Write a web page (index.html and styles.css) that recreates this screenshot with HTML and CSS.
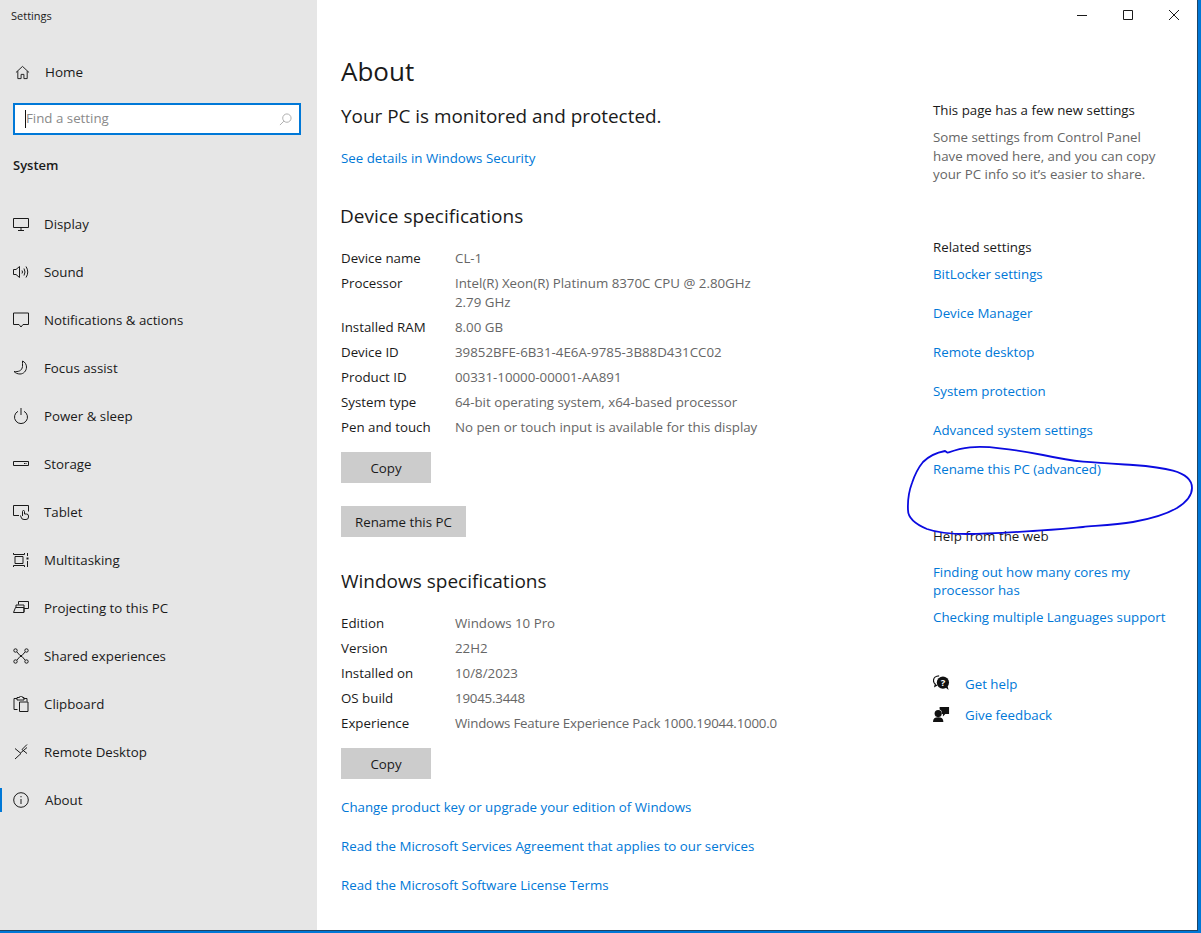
FILE: index.html
```html
<!DOCTYPE html>
<html lang="en">
  <head>
    <meta charset="UTF-8" />
    <meta name="viewport" content="width=device-width, initial-scale=1.0" />
    <title>Settings - About</title>
    <link rel="stylesheet" href="styles.css">
  </head>
  <body>
    <div class="window">
      <aside class="sidebar">
        <div class="app-title">Settings</div>
        <a class="nav-home">
          <svg class="icon" viewBox="0 0 16 16"><path d="M1 8 8 1.500 15 8M3 6.500V14.500h3.500V10h3v4.500H13V6.500"/></svg>
          <span>Home</span>
        </a>
        <div class="search">
          <span class="caret"></span>
          <span class="placeholder">Find a setting</span>
          <svg class="search-icon" viewBox="0 0 14 14"><circle cx="8.500" cy="5.500" r="4.500"/><path d="M5.200 8.800 1 13"/></svg>
        </div>
        <div class="section-title">System</div>
        <nav class="nav-list">
          <a class="nav-item">
            <svg class="icon" viewBox="0 0 16 16"><path d="M.5 2.500h15v9H.5zM5 14.500h6M8 11.500v3"/></svg>
            <span>Display</span>
          </a>
          <a class="nav-item">
            <svg class="icon" viewBox="0 0 16 16"><path d="M.5 5.500h2.500L6.500 2.500v11L3 10.500H.5zM9 6.500q1 1.500 0 3M11 4.500q2 3.500 0 7M13 2.500q3.500 5.500 0 11"/></svg>
            <span>Sound</span>
          </a>
          <a class="nav-item">
            <svg class="icon" viewBox="0 0 16 16"><path d="M.5 1h15v11.500h-5.500L8 15l-2-2.500H.5z"/></svg>
            <span>Notifications &amp; actions</span>
          </a>
          <a class="nav-item">
            <svg class="icon" viewBox="0 0 16 16"><path d="M9.500 1C12 2 13.500 4.500 13.500 7c0 4-3 7-6.500 7-2.500 0-4.500-1-6-2.500 4 .5 8-.5 8.500-5 .2-2-.2-4-0-5.500z"/></svg>
            <span>Focus assist</span>
          </a>
          <a class="nav-item">
            <svg class="icon" viewBox="0 0 16 16"><path d="M5 3.300a6.500 6.500 0 1 0 6 0M8 0v7"/></svg>
            <span>Power &amp; sleep</span>
          </a>
          <a class="nav-item">
            <svg class="icon" viewBox="0 0 16 16"><path d="M.5 5.500h15v4H.5zM11 7.500h1.500M13.500 7.500h.5"/></svg>
            <span>Storage</span>
          </a>
          <a class="nav-item">
            <svg class="icon" viewBox="0 0 16 16"><path d="M6 11.500H.5v-10h15v6M9.500 12V7.500a1 1 0 0 1 2 0V10h2a2 2 0 0 1 2 2v1a2.500 2.500 0 0 1-2.500 2.500h-2a3 3 0 0 1-3-2.500l-.5-1.500"/></svg>
            <span>Tablet</span>
          </a>
          <a class="nav-item">
            <svg class="icon" viewBox="0 0 16 16"><path d="M.5 1v1.500h11V1M2 4.500h8v7H2zM.5 15v-1.500h11V15M14.500 1v3M14.500 9v6"/><path class="dot" d="M13.500 5.500h2v2h-2z"/></svg>
            <span>Multitasking</span>
          </a>
          <a class="nav-item">
            <svg class="icon" viewBox="0 0 16 16"><path d="M5.500 4.500V1.500h10v7H11M3 7.500V5h8v7M.5 12.500l2-5h8.500v5z"/></svg>
            <span>Projecting to this PC</span>
          </a>
          <a class="nav-item">
            <svg class="icon" viewBox="0 0 16 16"><circle cx="2.500" cy="2.500" r="1.700"/><circle cx="13.500" cy="2.500" r="1.700"/><circle cx="2.500" cy="13.500" r="1.700"/><circle cx="13.500" cy="13.500" r="1.700"/><path d="m4 4 3 3.500h2L12 4M4 12l3-3.500h2l3 3.500"/></svg>
            <span>Shared experiences</span>
          </a>
          <a class="nav-item">
            <svg class="icon" viewBox="0 0 16 16"><path d="M4.500 13.500H1v-11h3M10.500 2.500H14v3M4 1.500h2.500a1.500 1.500 0 0 1 3 0H11v2.500H4zM6.500 6h8.500v9.500H6.500z"/></svg>
            <span>Clipboard</span>
          </a>
          <a class="nav-item">
            <svg class="icon" viewBox="0 0 16 16"><path d="M2 4.500 8 9.500 2 15M7.500 9 14 3.500M14 .5 9 5.500l5 4"/></svg>
            <span>Remote Desktop</span>
          </a>
          <a class="nav-item active">
            <svg class="icon" viewBox="0 0 16 16"><circle cx="8" cy="8" r="7.300"/><path d="M8 7v5M8 4v1.300"/></svg>
            <span>About</span>
          </a>
        </nav>
      </aside>

      <main class="content">
        <div class="window-controls">
          <svg viewBox="0 0 46 32"><path d="M18 15.500h10"/></svg>
          <svg viewBox="0 0 46 32"><path d="M18.500 10.500h9v9h-9z"/></svg>
          <svg viewBox="0 0 46 32"><path d="m18 10 10 10M28 10 18 20"/></svg>
        </div>
        <div class="columns">
          <section class="main-col">
            <h1>About</h1>
            <h2 class="status">Your PC is monitored and protected.</h2>
            <a class="link security-link">See details in Windows Security</a>

            <h3 class="device-head">Device specifications</h3>
            <div class="specs">
              <div class="spec"><span>Device name</span><span>CL-1</span></div>
              <div class="spec"><span>Processor</span><span>Intel(R) Xeon(R) Platinum 8370C CPU @ 2.80GHz<br>2.79 GHz</span></div>
              <div class="spec"><span>Installed RAM</span><span>8.00 GB</span></div>
              <div class="spec"><span>Device ID</span><span>39852BFE-6B31-4E6A-9785-3B88D431CC02</span></div>
              <div class="spec"><span>Product ID</span><span>00331-10000-00001-AA891</span></div>
              <div class="spec"><span>System type</span><span>64-bit operating system, x64-based processor</span></div>
              <div class="spec"><span>Pen and touch</span><span>No pen or touch input is available for this display</span></div>
            </div>
            <button class="btn copy-btn">Copy</button>
            <button class="btn rename-btn">Rename this PC</button>

            <h3 class="win-head">Windows specifications</h3>
            <div class="specs">
              <div class="spec"><span>Edition</span><span>Windows 10 Pro</span></div>
              <div class="spec"><span>Version</span><span>22H2</span></div>
              <div class="spec"><span>Installed on</span><span>10/8/2023</span></div>
              <div class="spec"><span>OS build</span><span class="tight">19045.3448</span></div>
              <div class="spec"><span>Experience</span><span class="tight">Windows Feature Experience Pack 1000.19044.1000.0</span></div>
            </div>
            <button class="btn copy-btn">Copy</button>

            <div class="bottom-links">
              <a class="link">Change product key or upgrade your edition of Windows</a>
              <a class="link">Read the Microsoft Services Agreement that applies to our services</a>
              <a class="link">Read the Microsoft Software License Terms</a>
            </div>
          </section>

          <section class="side-col">
            <div class="side-head">This page has a few new settings</div>
            <p class="side-note">Some settings from Control Panel have moved here, and you can copy your PC info so it&rsquo;s easier to share.</p>

            <div class="side-head related">Related settings</div>
            <div class="related-links">
              <a class="link">BitLocker settings</a>
              <a class="link">Device Manager</a>
              <a class="link">Remote desktop</a>
              <a class="link">System protection</a>
              <a class="link">Advanced system settings</a>
              <a class="link">Rename this PC (advanced)</a>
            </div>

            <div class="side-head web">Help from the web</div>
            <a class="link web-link">Finding out how many cores my processor has</a>
            <a class="link lang-link">Checking multiple Languages support</a>

            <div class="help-row first">
              <svg viewBox="0 0 18 18"><path class="solid" d="M6.500 1C3 1 .5 3.200.5 6c0 1.500.8 2.800 2 3.700L2 12l2.500-1.500"/><circle class="fill" cx="10.500" cy="8" r="6.500"/><path class="fill" d="M13 13l3.500 3-1-4z"/><text x="10.500" y="11.500" class="q">?</text></svg>
              <a class="link">Get help</a>
            </div>
            <div class="help-row">
              <svg viewBox="0 0 18 18"><circle class="fill" cx="5.500" cy="8" r="3.800"/><path class="fill" d="M0 17c0-3.500 2-5 5.500-5s5.500 1.500 5.500 5zM7 1h10v7.500h-4L10.500 11V8.500H9.500C9.500 6 9 4.500 7 3.800z"/></svg>
              <a class="link">Give feedback</a>
            </div>
          </section>
        </div>

        <svg class="scribble" viewBox="0 0 301 110">
          <path d="M48 12.700C55 10 62 8 70 7.300C80 6.500 90 7 100 8.300C115 10 130 12.500 143 15C157 18 170 20.500 183 21.700C200 23 217 24 233 25C247 26 262 27.500 273 30.700C285 34 292 40 292 48C292 56 285 63 277 68C265 75 250 79 233 82C217 84.500 200 85.500 183 87C166 88.500 150 90 133 91C110 92.500 88 94 67 94C52 94 38 93 27 89C15 84 8 78 8 70C7.500 60 9 51 12 43C15 34 18 28 23 22C29 16 37 12.500 45 11L48 13"/>
        </svg>
      </main>
    </div>
  </body>
</html>
```

FILE: styles.css
```css
* {
  margin: 0;
  padding: 0;
  box-sizing: border-box;
  font-family: "Open Sans", "Noto Sans", sans-serif;
}
body {
  width: 1201px;
  height: 933px;
  overflow: hidden;
  background-color: #0078d7;
}
.window {
  display: flex;
  width: 1197px;
  height: 930px;
  background-color: #fff;
  box-shadow: 0 0 0 1px #1d4466;
}
a {
  display: block;
}
svg {
  fill: none;
  stroke: #1a1a1a;
  stroke-width: 1;
}

/* left nav */
.sidebar {
  width: 317px;
  flex-shrink: 0;
  background-color: #e6e6e6;
  color: #1a1a1a;
  font-size: 13.300px;
}
.app-title {
  padding: 8px 0 0 11px;
  font-size: 11px;
  line-height: 16px;
}
.nav-home {
  display: flex;
  align-items: center;
  gap: 15px;
  height: 48px;
  margin-top: 24px;
  padding-left: 15px;
  font-size: 13.500px;
}
.icon {
  width: 15px;
  height: 15px;
  flex-shrink: 0;
}
.nav-item .icon {
  width: 16px;
  height: 16px;
}
.icon .dot {
  fill: #1a1a1a;
  stroke: none;
}
.search {
  display: flex;
  align-items: center;
  width: 288px;
  height: 32px;
  margin: 7px 0 0 13px;
  padding: 0 7px 2px 10px;
  background-color: #fff;
  border: 2px solid #0078d7;
}
.caret {
  width: 1px;
  height: 18px;
  margin-top: 2px;
  background-color: #111;
}
.placeholder {
  flex: 1;
  color: #8a8a8a;
  font-size: 13.300px;
}
.search-icon {
  width: 13px;
  height: 13px;
  margin-top: 2px;
  stroke: #aaa;
}
.section-title {
  margin: 20px 0 0 13px;
  font-size: 13px;
  font-weight: 600;
  line-height: 20px;
}
.nav-list {
  margin-top: 25px;
}
.nav-item {
  position: relative;
  display: flex;
  align-items: center;
  gap: 15px;
  height: 48px;
  padding-left: 13px;
}
.nav-item.active::before {
  content: "";
  position: absolute;
  left: 0;
  top: 12px;
  width: 2px;
  height: 24px;
  background-color: #0078d7;
}
.nav-item.active {
  gap: 16px;
}

/* content */
.content {
  position: relative;
  flex: 1;
  min-width: 0;
  color: #1a1a1a;
}
.window-controls {
  display: flex;
  justify-content: flex-end;
  height: 32px;
}
.window-controls svg {
  width: 46px;
  height: 32px;
}
.columns {
  display: flex;
  padding-left: 24px;
}
.main-col {
  width: 592px;
  flex-shrink: 0;
}
.side-col {
  flex: 1;
  min-width: 0;
  padding-right: 24px;
  font-size: 13.300px;
}
h1 {
  margin-top: 19px;
  font-size: 26px;
  font-weight: 400;
  line-height: 40px;
}
.status {
  margin-top: 12px;
  font-size: 18.900px;
  font-weight: 400;
  line-height: 26px;
}
.link {
  color: #0078d7;
  font-size: 13.300px;
  line-height: 18px;
}
.security-link {
  margin-top: 20px;
}
h3 {
  font-size: 19px;
  font-weight: 400;
  line-height: 26px;
}
.device-head {
  margin: 36px 0 0 -1px;
}
.win-head {
  margin-top: 31px;
}
.specs {
  margin-top: 20px;
  font-size: 13.300px;
}
.win-head + .specs {
  margin-top: 20px;
}
.spec {
  display: grid;
  grid-template-columns: 114px 1fr;
  padding-bottom: 6px;
  line-height: 19px;
}
.spec span:last-child {
  color: #666;
}
.spec .tight {
  letter-spacing: -0.200px;
}
.btn {
  display: block;
  height: 31px;
  padding: 0 14px;
  background-color: #ccc;
  border: none;
  color: #1a1a1a;
  font-size: 13.300px;
}
.copy-btn {
  width: 90px;
  margin-top: 9px;
}
.rename-btn {
  margin-top: 23px;
}
.bottom-links {
  display: flex;
  flex-direction: column;
  gap: 21px;
  margin-top: 19px;
}
.side-head {
  margin-top: 69px;
  line-height: 18px;
}
.side-note {
  width: 232px;
  margin-top: 9px;
  color: #666;
  line-height: 18.500px;
}
.side-head.related {
  margin-top: 54px;
}
.related-links {
  display: flex;
  flex-direction: column;
  gap: 21px;
  margin-top: 9px;
}
.side-head.web {
  margin-top: 49px;
}
.web-link {
  margin-top: 18px;
  width: 232px;
}
.lang-link {
  margin-top: 9px;
}
.help-row {
  display: flex;
  align-items: center;
  gap: 15px;
  height: 20px;
  margin-top: 11px;
}
.help-row.first {
  margin-top: 48px;
}
.help-row svg {
  width: 17px;
  height: 17px;
  flex-shrink: 0;
}
.help-row .fill {
  fill: #111;
  stroke: none;
}
.help-row .solid {
  stroke: #111;
  stroke-width: 1.300;
}
.help-row .q {
  fill: #fff;
  stroke: none;
  font-size: 10px;
  font-weight: 700;
  text-anchor: middle;
}

/* pen mark on top of the screenshot */
.scribble {
  position: absolute;
  left: 583px;
  top: 440px;
  width: 301px;
  height: 110px;
  stroke: #0b0be0;
  stroke-width: 1.800;
}
```
